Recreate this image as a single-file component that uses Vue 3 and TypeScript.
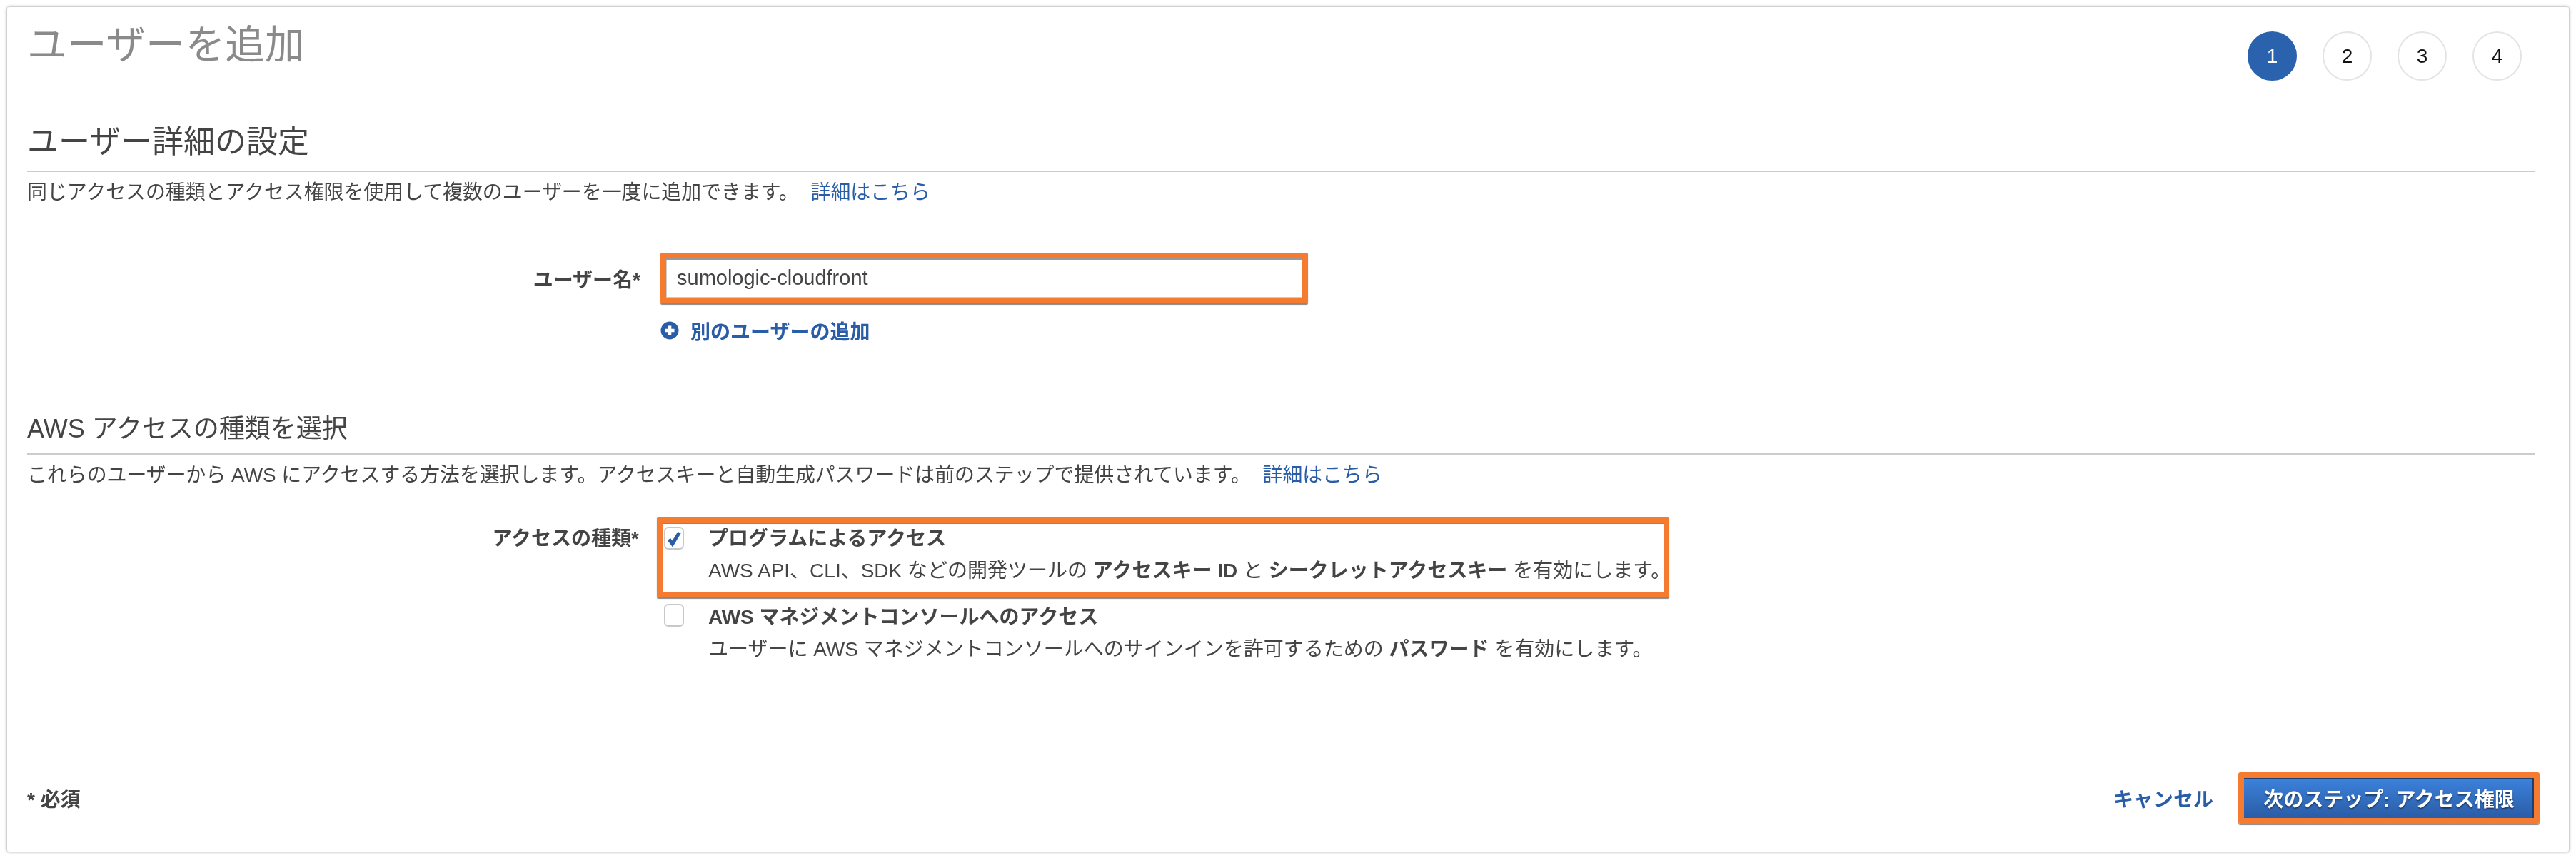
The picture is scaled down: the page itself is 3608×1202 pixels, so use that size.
<script setup lang="ts">
const steps: number[] = [1, 2, 3, 4]
</script>

<template>
  <div class="page">
    <main class="card">
      <header class="head">
        <h1 class="title">ユーザーを追加</h1>
        <ol class="steps">
          <li v-for="s in steps" :key="s" class="step" :class="{ active: s === 1 }">{{ s }}</li>
        </ol>
      </header>

      <section>
        <h2 class="sec-title first">ユーザー詳細の設定</h2>
        <p class="desc">同じアクセスの種類とアクセス権限を使用して複数のユーザーを一度に追加できます。 <a class="link more">詳細はこちら</a></p>

        <div class="user-row">
          <label class="field-label user-label">ユーザー名*</label>
          <div class="input-box">sumologic-cloudfront</div>
        </div>
        <a class="add-user">
          <svg class="plus" viewBox="0 0 26 26" aria-hidden="true">
            <circle cx="13" cy="13" r="12.5" fill="#2a5da8" />
            <path d="M13 6.5v13M6.5 13h13" stroke="#fff" stroke-width="4.6" fill="none" />
          </svg>
          <span>別のユーザーの追加</span>
        </a>
      </section>

      <section>
        <h2 class="sec-title second">AWS アクセスの種類を選択</h2>
        <p class="desc">これらのユーザーから AWS にアクセスする方法を選択します。アクセスキーと自動生成パスワードは前のステップで提供されています。 <a class="link more">詳細はこちら</a></p>

        <div class="access-row">
          <label class="field-label access-label">アクセスの種類*</label>
          <div class="options">
            <div class="option hl">
              <span class="check">
                <svg viewBox="0 0 28 32" aria-hidden="true">
                  <path d="M7 17.5l4.8 6.5L21.5 8" fill="none" stroke="#2a5da8" stroke-width="5" />
                </svg>
              </span>
              <div>
                <div class="opt-title">プログラムによるアクセス</div>
                <div class="opt-desc">AWS API、CLI、SDK などの開発ツールの <b>アクセスキー ID</b> と <b>シークレットアクセスキー</b> を有効にします。</div>
              </div>
            </div>
            <div class="option second-opt">
              <span class="check"></span>
              <div>
                <div class="opt-title">AWS マネジメントコンソールへのアクセス</div>
                <div class="opt-desc">ユーザーに AWS マネジメントコンソールへのサインインを許可するための <b>パスワード</b> を有効にします。</div>
              </div>
            </div>
          </div>
        </div>
      </section>

      <footer class="foot">
        <span class="required">* 必須</span>
        <div class="actions">
          <a class="cancel">キャンセル</a>
          <button class="next" type="button">次のステップ: アクセス権限</button>
        </div>
      </footer>
    </main>
  </div>
</template>

<style>
html, body { margin: 0; background: #fff; }
</style>

<style scoped>
.page {
  width: 3608px;
  height: 1202px;
  padding: 10px;
  box-sizing: border-box;
  font-family: "Liberation Sans", "Noto Sans CJK JP", sans-serif;
  color: #444;
  background: #fff;
  overflow: hidden;
}
.card {
  height: 1183px;
  box-sizing: border-box;
  padding: 0 48px 39px 28px;
  display: flex;
  flex-direction: column;
  background: #fff;
  border-radius: 3px;
  box-shadow: 0 0 4px rgba(0, 0, 0, 0.45);
  filter: blur(0.7px);
}
.head {
  height: 140px;
  display: flex;
  justify-content: space-between;
  align-items: flex-start;
}
.title {
  margin: 20px 0 0;
  font-size: 55.7px;
  line-height: 66px;
  font-weight: 400;
  color: #8a8a8a;
}
.steps {
  list-style: none;
  margin: 34px 18px 0 0;
  padding: 0;
  display: flex;
  gap: 36px;
}
.step {
  width: 69px;
  height: 69px;
  box-sizing: border-box;
  border: 2px solid #e4e4e4;
  border-radius: 50%;
  display: flex;
  align-items: center;
  justify-content: center;
  font-size: 28px;
  color: #111;
}
.step.active {
  background: #2a62ae;
  border-color: #2a62ae;
  color: #fff;
}
.sec-title {
  margin: 0;
  font-weight: 400;
  color: #444;
  border-bottom: 2px solid #ccc;
}
.sec-title.first {
  margin-top: 19px;
  font-size: 44px;
  line-height: 60px;
  padding-bottom: 10px;
}
.sec-title.second {
  margin-top: 93px;
  font-size: 36px;
  line-height: 50px;
  padding-bottom: 9px;
}
.desc {
  margin: 9px 0 0;
  font-size: 27.9px;
  line-height: 40px;
  white-space: nowrap;
}
.link, .add-user, .cancel { color: #2a5da8; }
.more { margin-left: 9px; }
.field-label {
  font-size: 28px;
  font-weight: 700;
  text-align: right;
  color: #444;
  box-sizing: border-box;
}
.user-row {
  display: flex;
  align-items: center;
  margin-top: 64px;
  gap: 28px;
}
.user-label { width: 859px; }
.input-box {
  width: 907px;
  height: 71px;
  box-sizing: border-box;
  border: 8px solid #f47b30;
  border-radius: 2px;
  padding-left: 15px;
  display: flex;
  align-items: center;
  font-size: 29px;
  color: #444;
  box-shadow: 0 2px 1px #888, inset 0 2px 0 #999, inset 0 0 0 1px #ccc;
}
.add-user {
  margin: 18px 0 0 887px;
  height: 40px;
  display: flex;
  align-items: center;
  gap: 16px;
  font-size: 28px;
  font-weight: 700;
}
.plus { width: 26px; height: 26px; flex: none; }
.access-row {
  display: flex;
  margin-top: 38px;
}
.access-label {
  width: 882px;
  padding: 13px 25px 0 0;
  line-height: 36px;
}
.options { display: flex; flex-direction: column; }
.option {
  display: flex;
  width: 1418px;
  box-sizing: border-box;
  border: 8px solid transparent;
  padding: 5px 0 11px 2px;
  gap: 34px;
}
.option.hl {
  border-color: #f47b30;
  border-radius: 2px;
  box-shadow: 0 2px 1px #888, inset 0 2px 0 #888;
}
.option.second-opt { margin-top: -3px; }
.second-opt .check { margin-top: -1px; }
.check {
  flex: none;
  width: 28px;
  height: 32px;
  margin-top: 1px;
  box-sizing: border-box;
  border: 2px solid #c8c8c8;
  border-radius: 6px;
  background: #fff;
  position: relative;
}
.check svg {
  position: absolute;
  left: -2px;
  top: -2px;
  width: 28px;
  height: 32px;
}
.opt-title {
  font-size: 28px;
  line-height: 36px;
  font-weight: 700;
  color: #444;
}
.opt-desc {
  margin-top: 9px;
  font-size: 28px;
  line-height: 36px;
  white-space: nowrap;
}
.foot {
  margin-top: auto;
  display: flex;
  justify-content: space-between;
  align-items: center;
}
.required {
  font-size: 28px;
  font-weight: 700;
  color: #444;
}
.actions {
  display: flex;
  align-items: center;
  gap: 35px;
  margin-right: -7px;
}
.cancel {
  font-size: 28px;
  font-weight: 700;
}
.next {
  width: 422px;
  height: 72px;
  box-sizing: border-box;
  border: 8px solid #f47b30;
  border-radius: 3px;
  padding: 0;
  font-family: inherit;
  font-size: 28px;
  font-weight: 700;
  color: #fff;
  text-shadow: 0 2px 2px rgba(0, 0, 0, 0.45);
  background: linear-gradient(#3c82dc, #2a5ca6);
  box-shadow: 0 2px 1px #888, inset 0 2px 0 #1e3f72, inset -2px 0 0 #1e3f72;
}
</style>
